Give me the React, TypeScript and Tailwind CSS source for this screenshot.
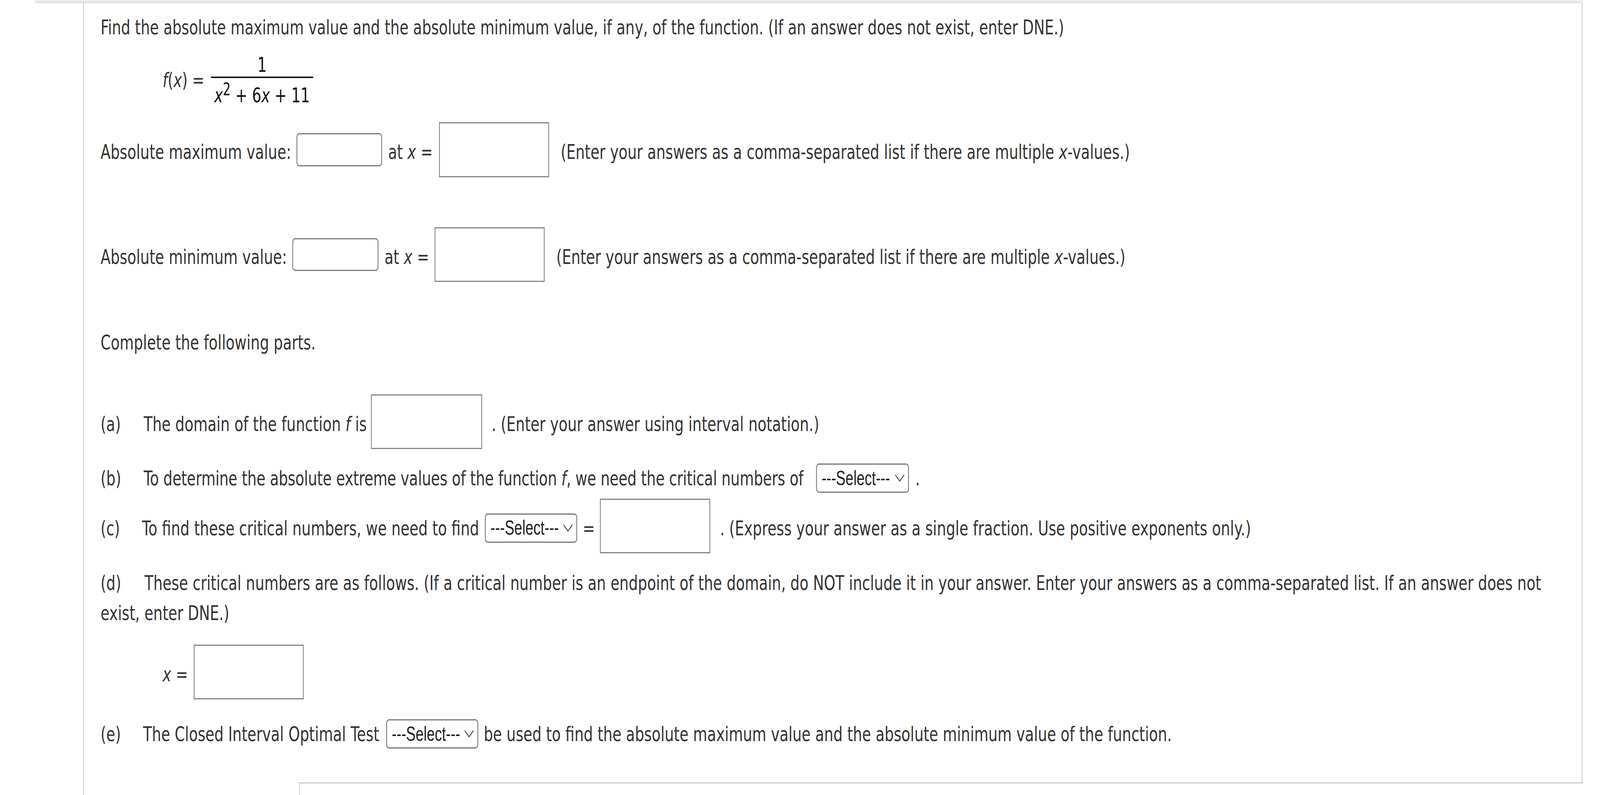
import React from 'react';

// The sheet is laid out on the 5758px-wide reference grid and then fitted
// into the 4096px-wide window horizontally.
export default function App() {
  return (
    <div className="w-[4096px] h-[2036px] overflow-hidden bg-white">
      <div className="w-[5758px] h-[2036px] origin-top-left scale-x-[0.71136] font-['DejaVu_Sans','Verdana',sans-serif] text-[52.3px] leading-[77px] text-[#333]">
        {/* bottom edge of the previous card */}
        <div className="ml-[124px] w-[5570px] h-[8px] rounded-bl-[8px] bg-linear-to-b from-[#f3f3f3] to-[#dcdcdc]" />

        {/* Question panel */}
        <div className="ml-[299px] w-[5396px] border-x-[3px] border-[#c9c9c9] pl-[60px] pr-[40px] pt-[23px] pb-[85px]">
          <p className="whitespace-nowrap">
            Find the absolute maximum value and the absolute minimum value, if any, of the function. (If an answer does not exist, enter DNE.)
          </p>

          {/* f(x) = 1 / (x^2 + 6x + 11) */}
          <div className="mt-[28px] ml-[223px] flex items-center leading-[60px] whitespace-nowrap">
            <span className="w-[174px] shrink-0">
              <i>f</i>(<i>x</i>) =
            </span>
            <div className="w-[368px] flex flex-col text-[#111]">
              <div className="text-center">1</div>
              <div className="h-[4px] bg-[#1a1a1a]" />
              <div className="pt-[14px] text-center">
                <i>x</i>
                <sup className="text-[44px] -top-[18px]">2</sup> + 6<i>x</i> + 11
              </div>
            </div>
          </div>

          <AnswerRow label="Absolute maximum value:" labelWidth="w-[705px]" atWidth="w-[183px]" small="w-[308px] h-[85px]" big="h-[141px]" className="mt-[39px]" />
          <AnswerRow label="Absolute minimum value:" labelWidth="w-[690px]" atWidth="w-[180px]" small="w-[310px] h-[84px]" big="h-[140px]" className="mt-[128px]" />

          <p className="mt-[116px]">Complete the following parts.</p>

          {/* (a) */}
          <div className="mt-[95px] flex items-center whitespace-nowrap">
            <span className="w-[155px] shrink-0 pt-[10px]">(a)</span>
            <span className="w-[818px] shrink-0 pt-[10px]">
              The domain of the function <i>f</i> is
            </span>
            <MathBox className="w-[400px]" />
            <span className="ml-[34px] pt-[10px]">. (Enter your answer using interval notation.)</span>
          </div>

          {/* (b) */}
          <div className="mt-[36px] flex items-center whitespace-nowrap">
            <span className="w-[155px] shrink-0">(b)</span>
            <span className="w-[2420px] shrink-0 tracking-[-0.35px]">
              To determine the absolute extreme values of the function <i>f</i>, we need the critical numbers of
            </span>
            <SelectBox className="w-[334px]" />
            <span className="ml-[23px]">.</span>
          </div>

          {/* (c) */}
          <div className="mt-[14px] flex items-center whitespace-nowrap">
            <span className="w-[149px] shrink-0 pt-[10px]">(c)</span>
            <span className="w-[1234px] shrink-0 pt-[10px]">To find these critical numbers, we need to find</span>
            <SelectBox className="w-[332px] mt-[10px]" />
            <span className="ml-[20px] w-[62px] shrink-0 pt-[10px]">=</span>
            <MathBox className="w-[397px]" />
            <span className="ml-[35px] pt-[10px]">
              . (Express your answer as a single fraction. Use positive exponents only.)
            </span>
          </div>

          {/* (d) */}
          <p className="mt-[37px] whitespace-nowrap">
            <span className="inline-block w-[158px]">(d)</span>These critical numbers are as follows. (If a critical number is an endpoint of the domain, do NOT include it in your answer. Enter your answers as a comma-separated list. If an answer does not
            <br />
            exist, enter DNE.)
          </p>

          <div className="mt-[43px] ml-[223px] flex items-center whitespace-nowrap">
            <span className="w-[112px] shrink-0 pt-[10px]">
              <i>x</i> =
            </span>
            <MathBox className="w-[396px]" />
          </div>

          {/* (e) */}
          <div className="mt-[50px] flex items-center whitespace-nowrap">
            <span className="w-[153px] shrink-0">(e)</span>
            <span className="w-[875px] shrink-0">The Closed Interval Optimal Test</span>
            <SelectBox className="w-[331px]" />
            <span className="ml-[20px]">
              be used to find the absolute maximum value and the absolute minimum value of the function.
            </span>
          </div>
        </div>

        {/* top of the next block */}
        <div className="ml-[299px] h-[40px] border-l-[3px] border-[#c9c9c9] pl-[774px]">
          <div className="w-[4619px] h-full border-t-[4px] border-l-[3px] border-[#d4d4d4]" />
        </div>
      </div>
    </div>
  );
}

function AnswerRow({
  label,
  labelWidth,
  atWidth,
  small,
  big,
  className,
}: {
  label: string;
  labelWidth: string;
  atWidth: string;
  small: string;
  big: string;
  className?: string;
}) {
  return (
    <div className={`flex items-center whitespace-nowrap ${className ?? ''}`}>
      <span className={`${labelWidth} shrink-0 pt-[10px]`}>{label}</span>
      <div className={`${small} shrink-0 rounded-[10px] border-[3px] border-[#7a7a7a] bg-white`} />
      <span className={`ml-[22px] ${atWidth} shrink-0 pt-[10px]`}>
        at <i>x</i> =
      </span>
      <div className={`w-[396px] ${big} shrink-0 border-[3px] border-[#858585] bg-white`} />
      <span className="ml-[42px] pt-[10px]">
        (Enter your answers as a comma-separated list if there are multiple <i>x</i>-values.)
      </span>
    </div>
  );
}

function MathBox({ className }: { className?: string }) {
  return <div className={`h-[140px] shrink-0 border-[3px] border-[#858585] bg-white ${className ?? ''}`} />;
}

function SelectBox({ className }: { className?: string }) {
  return (
    <div
      className={`flex h-[75px] shrink-0 items-center justify-between rounded-[10px] border-[3px] border-[#767676] bg-white pl-[17px] pr-[13px] font-['Liberation_Sans',Arial,sans-serif] text-[51.5px] leading-none text-[#1f1f1f] ${className ?? ''}`}
    >
      <span>---Select---</span>
      <svg className="w-[34px] h-[19px]" viewBox="0 0 34 19" fill="none">
        <path d="M2 2 L17 17 L32 2" stroke="#4a4a4a" strokeWidth="3" strokeLinecap="round" strokeLinejoin="round" />
      </svg>
    </div>
  );
}
